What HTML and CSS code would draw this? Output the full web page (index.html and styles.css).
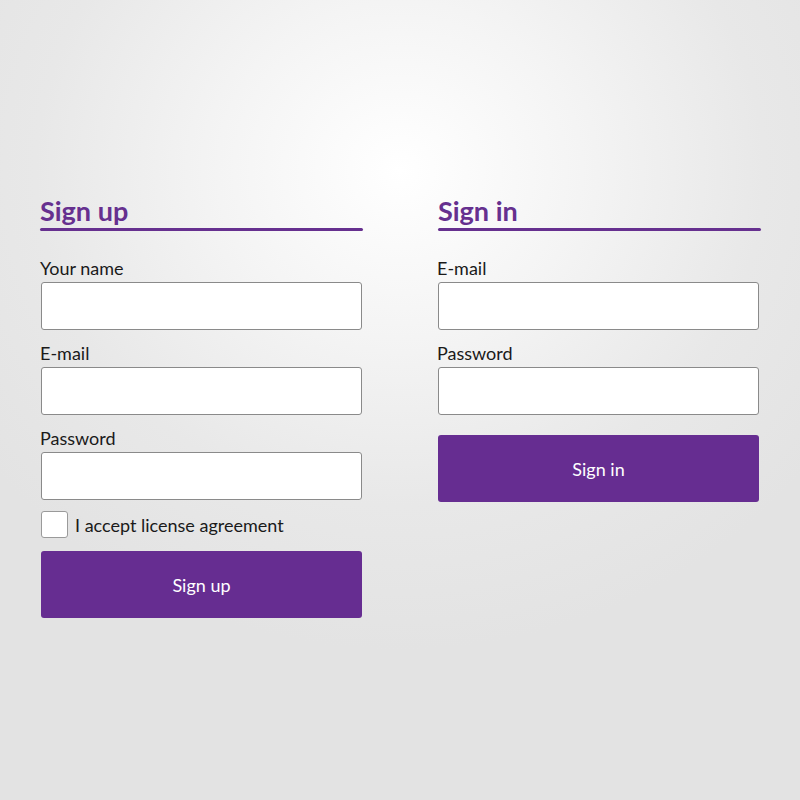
FILE: index.html
```html
<!DOCTYPE html>
<html lang="en">
<head>
<meta charset="utf-8">
<title>Sign up / Sign in</title>
<link rel="stylesheet" href="styles.css">
</head>
<body>
<main class="page">
  <section class="panel panel-left">
    <h2 class="title">Sign up</h2>
    <form class="form">
      <label class="label">Your name</label>
      <div class="input"></div>
      <label class="label">E-mail</label>
      <div class="input"></div>
      <label class="label">Password</label>
      <div class="input"></div>
      <div class="check-row">
        <span class="checkbox"></span>
        <span class="check-text">I accept license agreement</span>
      </div>
      <div class="button button-up">Sign up</div>
    </form>
  </section>
  <section class="panel panel-right">
    <h2 class="title">Sign in</h2>
    <form class="form">
      <label class="label">E-mail</label>
      <div class="input"></div>
      <label class="label">Password</label>
      <div class="input"></div>
      <div class="button button-in">Sign in</div>
    </form>
  </section>
</main>
</body>
</html>
```
FILE: styles.css
```css
html, body {
  margin: 0;
  padding: 0;
}
body {
  width: 800px;
  height: 800px;
  overflow: hidden;
  background: radial-gradient(ellipse 520px 480px at 400px 170px, #ffffff 0%, #f4f4f4 35%, #e8e8e8 70%, #e3e3e3 100%);
  font-family: Lato, "Open Sans", sans-serif;
  color: #1a1a1a;
}
.page {
  display: flex;
  gap: 74px;
  padding: 196px 39px 0;
}
.panel {
  width: 324px;
}
.title {
  margin: 0;
  font-size: 27px;
  line-height: 30px;
  font-weight: 700;
  color: #66308f;
  padding-left: 1px;
}
.title::after {
  content: "";
  display: block;
  height: 3px;
  margin-top: 2px;
  border-radius: 2px;
  background: #66308f;
}
.form {
  display: flex;
  flex-direction: column;
  margin-top: 26px;
}
.panel-left .form {
  padding: 0 1px 0 2px;
}
.panel-right .form {
  padding: 0 2px 0 1px;
}
.label {
  font-size: 18px;
  line-height: 22px;
  margin: 0 0 3px -1px;
}
.input {
  height: 46px;
  background: #fff;
  border: 1px solid #8a8a8a;
  border-radius: 3px;
  margin-bottom: 12px;
}
.check-row {
  display: flex;
  align-items: center;
  gap: 7px;
  margin-top: -1px;
  height: 27px;
}
.checkbox {
  width: 25px;
  height: 25px;
  background: #fff;
  border: 1px solid #9a9a9a;
  border-radius: 3px;
}
.check-text {
  font-size: 18px;
  line-height: 22px;
}
.button {
  height: 67px;
  background: #662d91;
  border-radius: 3px;
  color: #fff;
  font-size: 18px;
  display: flex;
  align-items: center;
  justify-content: center;
}
.button-up {
  margin-top: 13px;
}
.button-in {
  margin-top: 8px;
}
```
